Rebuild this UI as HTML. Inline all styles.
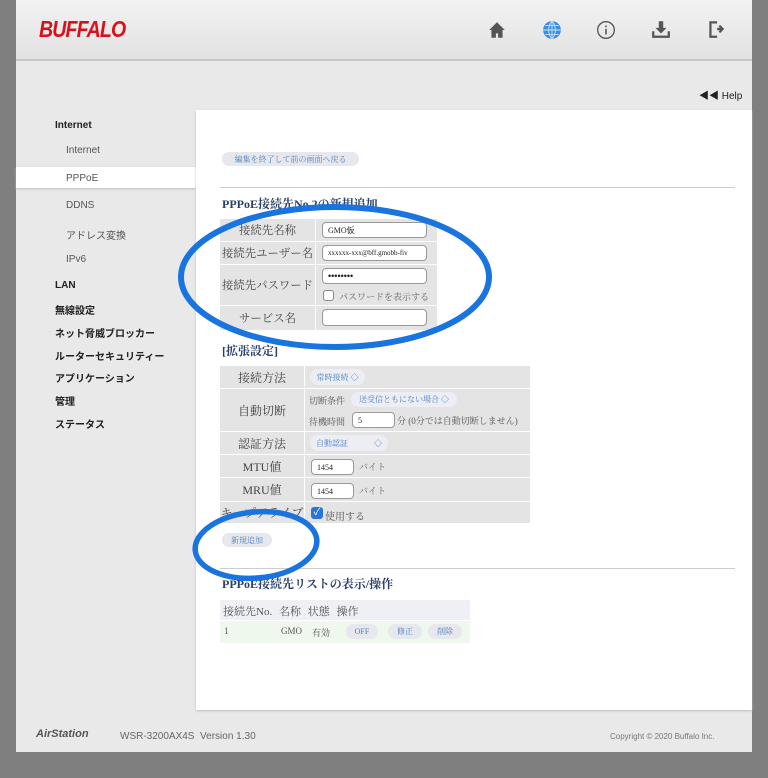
<!DOCTYPE html><html><head><meta charset="utf-8"><style>
*{margin:0;padding:0;box-sizing:border-box}
body{width:768px;height:778px;background:#7f7f7f;position:relative;overflow:hidden;font-family:"Liberation Sans","Noto Sans CJK JP",sans-serif}
.a{position:absolute}
.serif{font-family:"Liberation Serif","Noto Serif CJK SC",serif}
.nav{font-size:10px;font-weight:bold;color:#222;left:55px}
.sub{font-size:10px;color:#555;left:66px}
.cell{position:absolute;background:#e4e4e4;font-family:"Liberation Serif","Noto Serif CJK SC",serif;font-size:12px;color:#444;display:flex;align-items:center;white-space:nowrap}
.t1{font-size:11.4px}
.lab{justify-content:center}
.inp{position:absolute;background:#fff;border:1px solid #999;border-radius:4px;font-size:8px;font-family:"Liberation Serif",serif;padding-left:5px;display:flex;align-items:center;color:#222}
.btn{position:absolute;background:#e6e8ee;border-radius:9px;font-size:8px;color:#4a7fc0;display:flex;align-items:center;justify-content:center;font-family:"Liberation Serif","Noto Serif CJK SC",serif}
</style></head><body>
<div class="a" style="left:16px;top:0;width:736px;height:752px;background:#e9e9e9"></div>
<div class="a" style="left:16px;top:0;width:736px;height:61px;background:linear-gradient(#f2f2f2,#e2e2e2);border-bottom:2px solid #c8c8c8"></div>
<div class="a" style="left:39px;top:16px;font-size:23px;font-weight:bold;font-style:italic;color:#d8121b;letter-spacing:-1px;transform:scaleX(0.85);transform-origin:left">BUFFALO</div>
<svg class="a" style="left:487px;top:20px" width="20" height="20" viewBox="0 0 18 18"><path d="M9 2L2 9h2v7h4v-4h2v4h4V9h2z" fill="#555"/></svg>
<svg class="a" style="left:542px;top:20px" width="20" height="20" viewBox="0 0 18 18"><circle cx="9" cy="9" r="8" fill="#3a8fe0"/><path d="M1 9h16M9 1v16M3 5h12M3 13h12M9 1c-4 4-4 12 0 16M9 1c4 4 4 12 0 16" stroke="#cfe4fb" stroke-width="0.8" fill="none"/></svg>
<svg class="a" style="left:596px;top:20px" width="20" height="20" viewBox="0 0 18 18"><circle cx="9" cy="9" r="7.5" fill="none" stroke="#555" stroke-width="1.2"/><path d="M9 5v1.5M9 8v5" stroke="#555" stroke-width="1.4"/></svg>
<svg class="a" style="left:651px;top:19px" width="20" height="20" viewBox="0 0 18 18"><path d="M7 2h4v6h3l-5 5-5-5h3z" fill="#555"/><path d="M2 11v5h14v-5" stroke="#555" stroke-width="2" fill="none"/></svg>
<svg class="a" style="left:706px;top:19px" width="20" height="20" viewBox="0 0 18 18"><path d="M10 3H4v13h6M10 9h5M12 6l3 3-3 3" stroke="#555" stroke-width="2" fill="none"/></svg>
<div class="a" style="left:699px;top:87px;font-size:10px;color:#222">◀◀ Help</div>
<div class="a" style="left:16px;top:167px;width:180px;height:21px;background:#fff;box-shadow:0 1px 2px #bbb"></div>
<div class="a nav" style="top:120px">Internet</div>
<div class="a sub" style="top:145px">Internet</div>
<div class="a sub" style="top:173px">PPPoE</div>
<div class="a sub" style="top:200px">DDNS</div>
<div class="a sub" style="top:227px">アドレス変換</div>
<div class="a sub" style="top:254px">IPv6</div>
<div class="a nav" style="top:280px">LAN</div>
<div class="a nav" style="top:302px">無線設定</div>
<div class="a nav" style="top:325px">ネット脅威ブロッカー</div>
<div class="a nav" style="top:348px">ルーターセキュリティー</div>
<div class="a nav" style="top:370px">アプリケーション</div>
<div class="a nav" style="top:393px">管理</div>
<div class="a nav" style="top:416px">ステータス</div>
<div class="a" style="left:196px;top:110px;width:556px;height:600px;background:#fff;box-shadow:0 1px 2px #bbb"></div>
<div class="btn" style="left:222px;top:152px;width:137px;height:14px">編集を終了して前の画面へ戻る</div>
<div class="a" style="left:220px;top:187px;width:515px;height:1px;background:#ccc"></div>
<div class="a serif" style="left:222px;top:195px;font-size:12px;font-weight:bold;color:#2a3f6a">PPPoE接続先No.2の新規追加</div>
<div class="a" style="left:220px;top:219px;width:217px;height:111px;background:#fff"></div>
<div class="cell lab t1" style="left:220px;top:219px;width:95px;height:22px">接続先名称</div>
<div class="cell" style="left:316px;top:219px;width:121px;height:22px"></div>
<div class="cell lab t1" style="left:220px;top:242px;width:95px;height:22px">接続先ユーザー名</div>
<div class="cell" style="left:316px;top:242px;width:121px;height:22px"></div>
<div class="cell lab t1" style="left:220px;top:265px;width:95px;height:40px">接続先パスワード</div>
<div class="cell" style="left:316px;top:265px;width:121px;height:40px"></div>
<div class="cell lab t1" style="left:220px;top:306px;width:95px;height:24px">サービス名</div>
<div class="cell" style="left:316px;top:306px;width:121px;height:24px"></div>
<div class="inp" style="left:322px;top:222px;width:105px;height:16px">GMO仮</div>
<div class="inp" style="left:322px;top:245px;width:105px;height:16px;font-size:7px">xxxxxx-xxx@bff.gmobb-fiv</div>
<div class="inp" style="left:322px;top:268px;width:105px;height:16px;font-size:9px;font-weight:bold">••••••••</div>
<div class="a" style="left:323px;top:290px;width:11px;height:11px;border:1px solid #888;border-radius:3px;background:#fff"></div>
<div class="a serif" style="left:339px;top:290px;font-size:9px;color:#666">パスワードを表示する</div>
<div class="inp" style="left:322px;top:309px;width:105px;height:17px"></div>
<div class="a serif" style="left:222px;top:342px;font-size:12px;font-weight:bold;color:#2a3f6a">[拡張設定]</div>
<div class="a" style="left:220px;top:366px;width:310px;height:157px;background:#fff"></div>
<div class="cell lab" style="left:220px;top:366px;width:84px;height:22px">接続方法</div>
<div class="cell" style="left:305px;top:366px;width:225px;height:22px"></div>
<div class="cell lab" style="left:220px;top:389px;width:84px;height:42px">自動切断</div>
<div class="cell" style="left:305px;top:389px;width:225px;height:42px"></div>
<div class="cell lab" style="left:220px;top:432px;width:84px;height:22px">認証方法</div>
<div class="cell" style="left:305px;top:432px;width:225px;height:22px"></div>
<div class="cell lab" style="left:220px;top:455px;width:84px;height:22px">MTU値</div>
<div class="cell" style="left:305px;top:455px;width:225px;height:22px"></div>
<div class="cell lab" style="left:220px;top:478px;width:84px;height:23px">MRU値</div>
<div class="cell" style="left:305px;top:478px;width:225px;height:23px"></div>
<div class="cell lab" style="left:220px;top:502px;width:84px;height:21px">キープアライブ</div>
<div class="cell" style="left:305px;top:502px;width:225px;height:21px"></div>
<div class="btn" style="left:310px;top:369px;width:55px;height:16px;background:#eceef4">常時接続 ◇</div>
<div class="a serif" style="left:309px;top:394px;font-size:9px;color:#555">切断条件</div>
<div class="btn" style="left:351px;top:392px;width:106px;height:15px;background:#eceef4">送受信ともにない場合 ◇</div>
<div class="a serif" style="left:309px;top:415px;font-size:9px;color:#555">待機時間</div>
<div class="inp" style="left:352px;top:412px;width:43px;height:16px">5</div>
<div class="a serif" style="left:397px;top:414px;font-size:9px;color:#555">分 (0分では自動切断しません)</div>
<div class="btn" style="left:310px;top:435px;width:78px;height:16px;background:#eceef4;justify-content:space-between;padding:0 6px">自動認証<span>◇</span></div>
<div class="inp" style="left:311px;top:459px;width:43px;height:16px">1454</div>
<div class="a serif" style="left:359px;top:460px;font-size:9px;color:#666">バイト</div>
<div class="inp" style="left:311px;top:483px;width:43px;height:16px">1454</div>
<div class="a serif" style="left:359px;top:484px;font-size:9px;color:#666">バイト</div>
<div class="a" style="left:311px;top:507px;width:12px;height:12px;background:#2b74d8;border-radius:3px;color:#fff;font-size:10px;line-height:12px;text-align:center">✓</div>
<div class="a serif" style="left:325px;top:508px;font-size:10px;color:#555">使用する</div>
<div class="btn" style="left:222px;top:533px;width:50px;height:14px">新規追加</div>
<div class="a" style="left:220px;top:568px;width:515px;height:1px;background:#ccc"></div>
<div class="a serif" style="left:222px;top:575px;font-size:12px;font-weight:bold;color:#2a3f6a">PPPoE接続先リストの表示/操作</div>
<div class="a" style="left:220px;top:600px;width:250px;height:20px;background:#eef0f6"></div>
<div class="a" style="left:220px;top:621px;width:250px;height:22px;background:#eef8ec"></div>
<div class="a serif" style="left:223px;top:603px;font-size:11px;color:#555;word-spacing:4px">接続先No. 名称 状態 操作</div>
<div class="a serif" style="left:224px;top:626px;font-size:9px;color:#555">1</div>
<div class="a serif" style="left:281px;top:626px;font-size:9px;color:#555">GMO</div>
<div class="a serif" style="left:312px;top:626px;font-size:9px;color:#555">有効</div>
<div class="btn" style="left:346px;top:624px;width:32px;height:15px">OFF</div>
<div class="btn" style="left:388px;top:624px;width:34px;height:15px">修正</div>
<div class="btn" style="left:428px;top:624px;width:34px;height:15px">削除</div>
<svg class="a" style="left:0;top:0" width="768" height="778"><ellipse cx="335" cy="277" rx="154" ry="70" fill="none" stroke="#1a74e0" stroke-width="6"/><ellipse cx="256" cy="545" rx="61" ry="33" fill="none" stroke="#1a74e0" stroke-width="5.5" transform="rotate(-5 256 545)"/></svg>
<div class="a" style="left:36px;top:728px;font-size:11px;font-weight:bold;font-style:italic;color:#555">AirStation</div>
<div class="a" style="left:120px;top:731px;font-size:10px;color:#666">WSR-3200AX4S&nbsp; Version 1.30</div>
<div class="a" style="left:610px;top:732px;font-size:8px;color:#777">Copyright © 2020 Buffalo Inc.</div>
</body></html>
